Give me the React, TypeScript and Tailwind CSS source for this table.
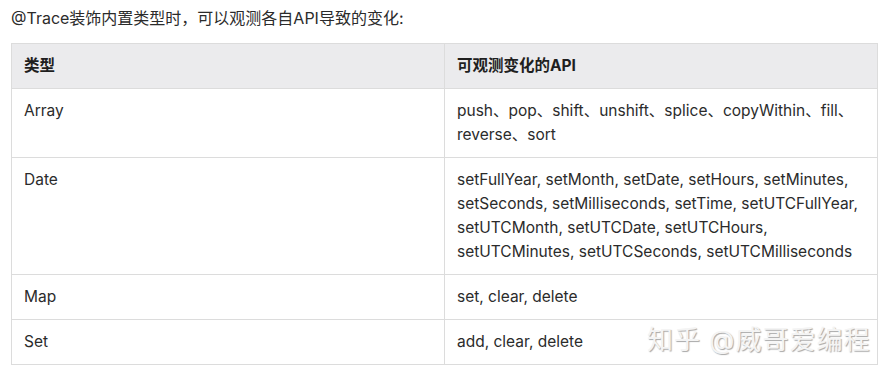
const ROWS = [
  { type: 'Array', apis: 'push、pop、shift、unshift、splice、copyWithin、fill、reverse、sort' },
  {
    type: 'Date',
    apis: 'setFullYear, setMonth, setDate, setHours, setMinutes, setSeconds, setMilliseconds, setTime, setUTCFullYear, setUTCMonth, setUTCDate, setUTCHours, setUTCMinutes, setUTCSeconds, setUTCMilliseconds',
  },
  { type: 'Map', apis: 'set, clear, delete' },
  { type: 'Set', apis: 'add, clear, delete' },
];

export default function App() {
  return (
    <div
      className="relative w-[889px] h-[378px] bg-white text-[#2b2b2b] overflow-hidden"
      style={{ fontFamily: 'Inter, "Noto Sans CJK SC", sans-serif' }}
    >
      <p className="pl-[11px] pt-[7px] text-[16px] leading-[22px]">@Trace装饰内置类型时，可以观测各自API导致的变化:</p>

      <table className="mt-[14px] ml-[11px] w-[867px] table-fixed border-collapse text-[15.5px] leading-[24px]">
        <thead>
          <tr className="bg-[#ebebed]">
            <th className="h-[45px] border border-[#dcdcdc] px-3 text-left font-bold text-[#1f1f1f]">类型</th>
            <th className="h-[45px] border border-[#dcdcdc] px-3 text-left font-bold text-[#1f1f1f]">可观测变化的API</th>
          </tr>
        </thead>
        <tbody>
          {ROWS.map((r) => (
            <tr key={r.type}>
              <td className="border border-[#dcdcdc] px-3 py-[10px] align-top">{r.type}</td>
              <td className="border border-[#dcdcdc] px-3 py-[10px] align-top">{r.apis}</td>
            </tr>
          ))}
        </tbody>
      </table>

      {/* zhihu watermark */}
      <div
        className="absolute left-[647px] top-[324px] text-[26px] leading-[32px] text-[#f4f4f4] tracking-[1px]"
        style={{ textShadow: '1px 1px 1px #a8a8a8' }}
      >
        知乎 @威哥爱编程
      </div>
    </div>
  );
}
